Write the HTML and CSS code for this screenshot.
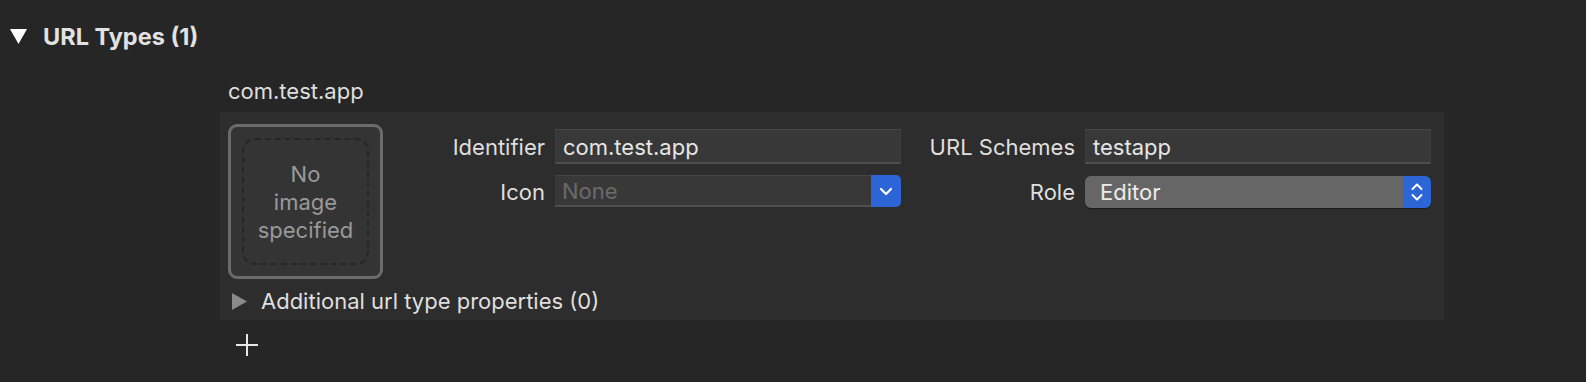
FILE: index.html
```html
<!DOCTYPE html>
<html lang="en">
  <head>
    <meta charset="UTF-8" />
    <meta name="viewport" content="width=device-width, initial-scale=1.0" />
    <title>URL Types</title>
    <link rel="stylesheet" href="styles.css">
  </head>
  <body>
    <div class="section">
      <div class="section-title">
        <svg class="disclosure" width="17" height="15" viewBox="0 0 17 15">
          <polygon points="0,0 17,0 8.5,15" fill="#ffffff" />
        </svg>
        <span>URL Types (1)</span>
      </div>

      <div class="entry">
        <div class="entry-name">com.test.app</div>

        <div class="panel">
          <div class="panel-main">
            <div class="image-well">
              <div class="image-well-inner">No<br />image<br />specified</div>
            </div>

            <div class="form">
              <label class="form-label">Identifier</label>
              <div class="text-field">com.test.app</div>
              <label class="form-label">URL Schemes</label>
              <div class="text-field">testapp</div>

              <label class="form-label">Icon</label>
              <div class="combo">
                <span class="combo-value placeholder">None</span>
                <span class="combo-button">
                  <svg width="14" height="9" viewBox="0 0 14 9">
                    <polyline points="2,2 7,7 12,2" fill="none" stroke="#fff" stroke-width="2.2" stroke-linecap="round" stroke-linejoin="round" />
                  </svg>
                </span>
              </div>
              <label class="form-label">Role</label>
              <div class="popup">
                <span class="popup-value">Editor</span>
                <span class="popup-button">
                  <svg width="14" height="24" viewBox="0 0 14 24">
                    <polyline points="2.5,9 7,4.5 11.5,9" fill="none" stroke="#fff" stroke-width="2" stroke-linecap="round" stroke-linejoin="round" />
                    <polyline points="2.5,15 7,19.5 11.5,15" fill="none" stroke="#fff" stroke-width="2" stroke-linecap="round" stroke-linejoin="round" />
                  </svg>
                </span>
              </div>
            </div>
          </div>

          <div class="more">
            <svg class="disclosure" width="15" height="17" viewBox="0 0 15 17">
              <polygon points="0,0 15,8.5 0,17" fill="#8a8a8a" />
            </svg>
            <span>Additional url type properties (0)</span>
          </div>
        </div>

        <div class="add">
          <svg width="22" height="22" viewBox="0 0 22 22">
            <line x1="11" y1="0" x2="11" y2="22" stroke="#e6e6e6" stroke-width="2" />
            <line x1="0" y1="11" x2="22" y2="11" stroke="#e6e6e6" stroke-width="2" />
          </svg>
        </div>
      </div>
    </div>
  </body>
</html>
```

FILE: styles.css
```css
body {
  margin: 0;
  background: #262626;
  color: #dfdfdf;
  font-family: Inter, "Liberation Sans", sans-serif;
  font-size: 22px;
}
.section {
  padding-top: 22px;
}
.section-title {
  display: flex;
  align-items: center;
  height: 28px;
  font-weight: bold;
  font-size: 23.5px;
  color: #e2e2e2;
}
.section-title .disclosure {
  margin-left: 10px;
  margin-right: 16px;
}
.entry {
  margin-left: 220px;
  width: 1224px;
  margin-top: 28px;
}
.entry-name {
  height: 26px;
  line-height: 26px;
  padding-left: 8px;
  margin-bottom: 8px;
}
.panel {
  background: #2d2d2d;
  padding: 12px 0 6px 8px;
}
.panel-main {
  display: flex;
  align-items: flex-start;
}
.image-well {
  width: 155px;
  height: 155px;
  box-sizing: border-box;
  border: 3px solid #6b6b6b;
  border-radius: 9px;
  background: #343434;
  padding: 11px;
}
.image-well-inner {
  height: 100%;
  box-sizing: border-box;
  border: 2px dashed #262626;
  border-radius: 13px;
  display: flex;
  align-items: center;
  justify-content: center;
  text-align: center;
  color: #999999;
  line-height: 28px;
}
.form {
  display: grid;
  grid-template-columns: 162px 346px 164px 346px;
  grid-template-rows: 35px 33px;
  column-gap: 10px;
  row-gap: 11px;
  margin-top: 5px;
  align-items: center;
}
.form-label {
  text-align: right;
  white-space: nowrap;
}
.text-field {
  height: 35px;
  box-sizing: border-box;
  background: #383838;
  border-top: 1px solid #474747;
  border-left: 1px solid #3f3f3f;
  border-right: 1px solid #3f3f3f;
  border-bottom: 2px solid #4f4f4f;
  padding-left: 7px;
  line-height: 34px;
  color: #e6e6e6;
}
.combo {
  display: flex;
  height: 32px;
  align-self: start;
}
.combo-value {
  flex: 1;
  background: #383838;
  border-top: 1px solid #444444;
  border-bottom: 2px solid #4f4f4f;
  padding-left: 7px;
  line-height: 31px;
}
.placeholder {
  color: #6a6a6a;
}
.combo-button {
  width: 30px;
  background: #2c66d6;
  border-radius: 0 5px 5px 0;
  display: flex;
  align-items: center;
  justify-content: center;
}
.popup {
  display: flex;
  height: 32px;
  border-radius: 6px;
  overflow: hidden;
  box-shadow: 0 1px 1px rgba(0, 0, 0, 0.4);
}
.popup-value {
  flex: 1;
  background: #666666;
  padding-left: 15px;
  line-height: 32px;
  color: #ececec;
}
.popup-button {
  width: 28px;
  background: #2c66d6;
  display: flex;
  align-items: center;
  justify-content: center;
}
.more {
  display: flex;
  align-items: center;
  height: 26px;
  margin-top: 9px;
}
.more .disclosure {
  margin-left: 4px;
  margin-right: 14px;
}
.add {
  margin: 14px 0 0 16px;
  height: 22px;
}
```
